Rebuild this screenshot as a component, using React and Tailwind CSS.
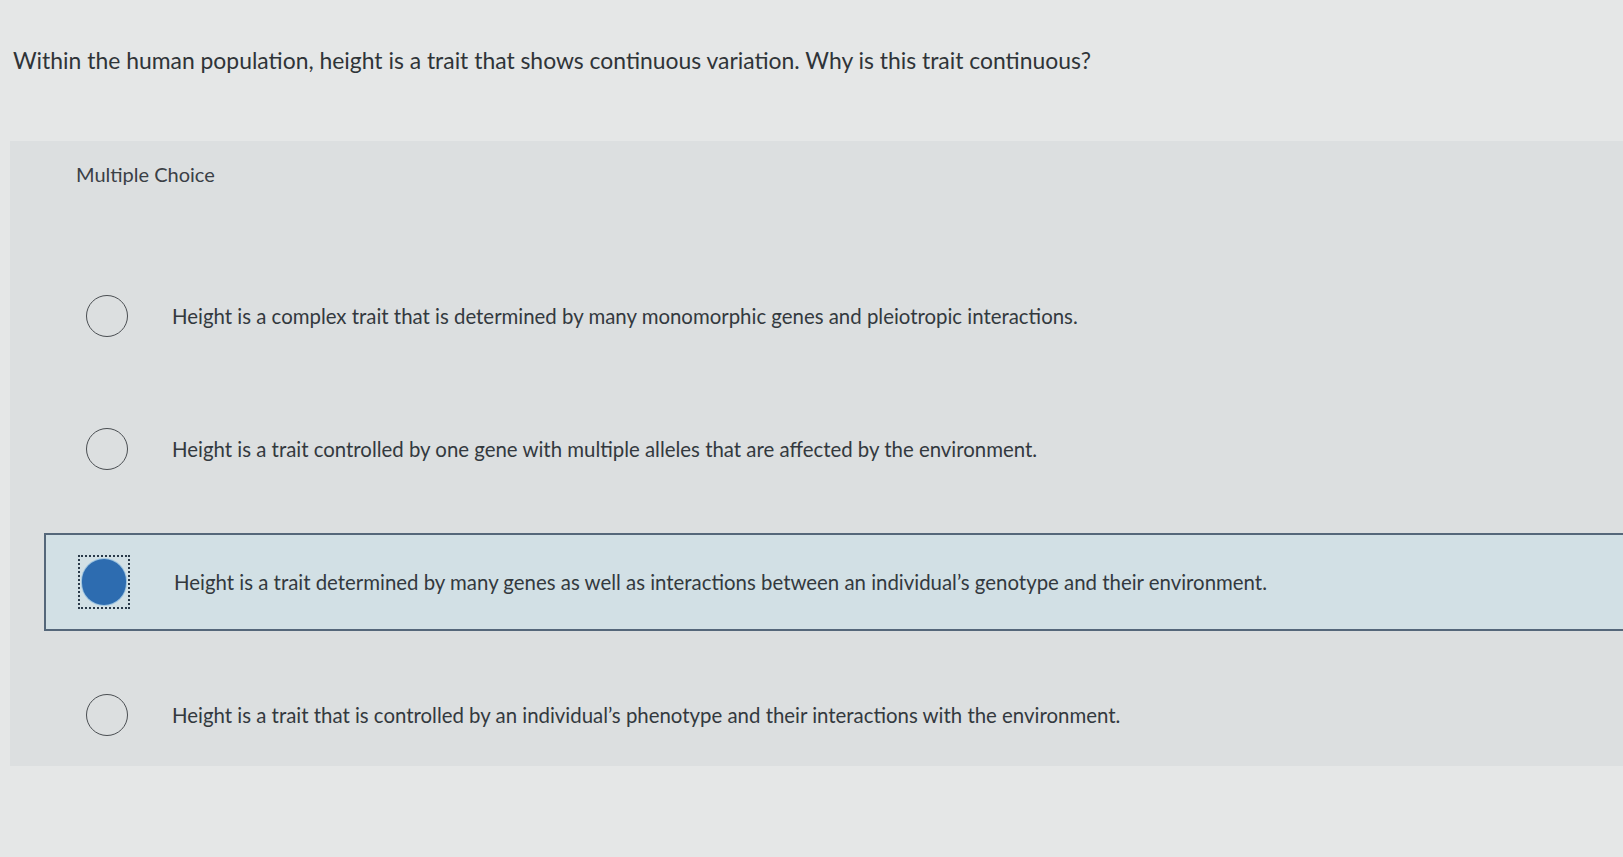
import React from "react";

const options = [
  "Height is a complex trait that is determined by many monomorphic genes and pleiotropic interactions.",
  "Height is a trait controlled by one gene with multiple alleles that are affected by the environment.",
  "Height is a trait determined by many genes as well as interactions between an individual’s genotype and their environment.",
  "Height is a trait that is controlled by an individual’s phenotype and their interactions with the environment.",
];

function Radio({ selected }) {
  if (selected) {
    return (
      <div className="w-[52px] h-[54px] border-2 border-dotted border-[#2a3a4a] flex items-center justify-center shrink-0">
        <div className="w-[44px] h-[46px] rounded-full bg-[#2d6cb0] ring-1 ring-[#9cc3e0]" />
      </div>
    );
  }
  return (
    <div className="w-[52px] h-[52px] flex items-center justify-center shrink-0 translate-x-[5px]">
      <div className="w-[42px] h-[42px] rounded-full border-[1.5px] border-[#4a4e52]" />
    </div>
  );
}

export default function App() {
  return (
    <div
      className="w-full h-[857px] bg-[#e5e7e7] overflow-hidden text-[#333a40]"
      style={{ fontFamily: "Lato, 'Open Sans', sans-serif" }}
    >
      <div className="pt-[45px] pl-[13px] text-[22.9px] leading-[30px] text-[#2f3438]">
        Within the human population, height is a trait that shows continuous variation. Why is this trait continuous?
      </div>
      <div className="mt-[66px] ml-[10px] bg-[#dcdfe0] h-[625px]">
        <div className="pt-[20px] pl-[66px] text-[20px] leading-[26px] text-[#3a4046]">Multiple Choice</div>
        <div className="mt-[80px] flex flex-col gap-[35px]">
          {options.map((t, i) => {
            const sel = i === 2;
            return (
              <div
                key={i}
                className={
                  "h-[98px] ml-[34px] flex items-center pl-[32px] " +
                  (sel ? "bg-[#d2e0e5] border-2 border-r-0 border-[#55677a]" : "")
                }
              >
                <Radio selected={sel} />
                <div className="ml-[44px] text-[20.4px] leading-[26px] text-[#33393e]">{t}</div>
              </div>
            );
          })}
        </div>
      </div>
    </div>
  );
}
